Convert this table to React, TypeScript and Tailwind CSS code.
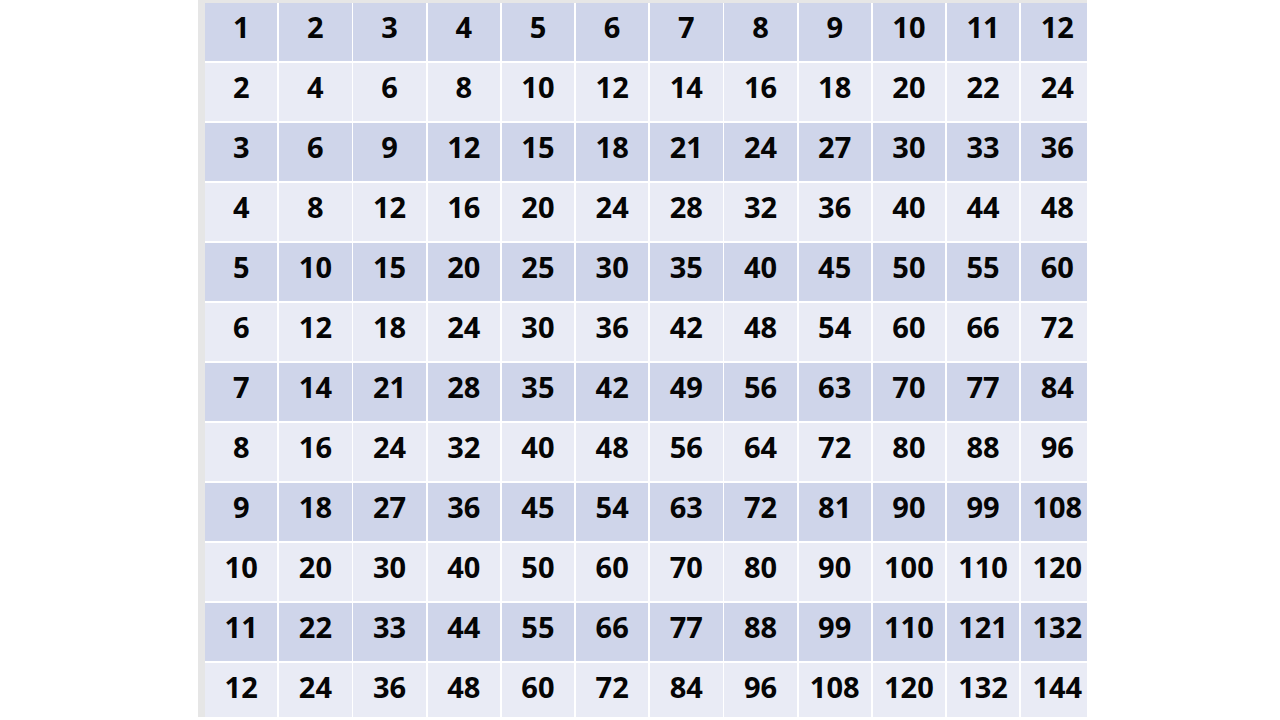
import React from "react";

export default function App() {
  const rows = Array.from({ length: 12 }, (_, i) => i + 1);
  return (
    <div className="w-[1280px] h-[720px] bg-white flex overflow-hidden">
      <div className="w-[198px] shrink-0" />
      <div className="w-[889px] h-[717px] shrink-0 bg-[#e6e6e6] pl-[7px] pt-[3px] overflow-hidden">
        <div className="h-[714px] overflow-hidden">
          <div className="grid grid-cols-[repeat(12,72.4px)] gap-x-[1.8px] gap-y-[2px] bg-white w-[905px]">
            {rows.map((r) =>
              rows.map((c) => (
                <div
                  key={`${r}-${c}`}
                  className={`h-[58px] flex items-center justify-center pb-[10px] text-[29px] font-bold text-[#050505] ${
                    r % 2 === 1 ? "bg-[#cfd5ea]" : "bg-[#e9ebf5]"
                  }`}
                  style={{ fontFamily: '"Open Sans", sans-serif' }}
                >
                  {r * c}
                </div>
              ))
            )}
          </div>
        </div>
      </div>
    </div>
  );
}
